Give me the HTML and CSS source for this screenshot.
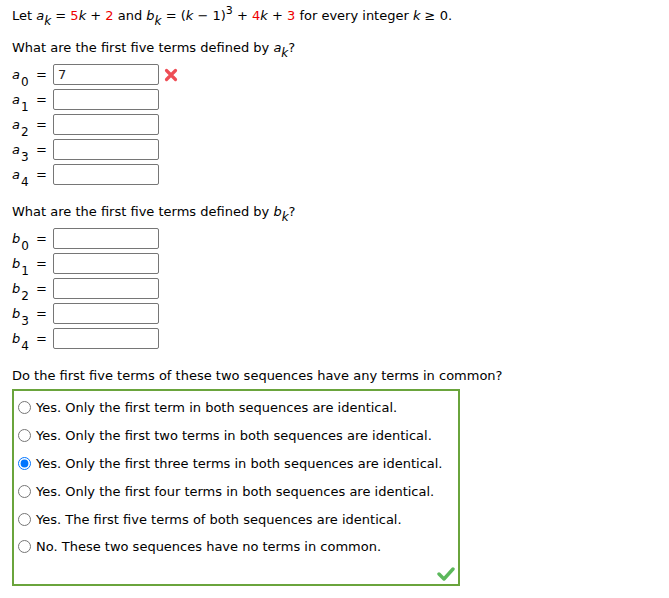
FILE: index.html
```html
<!DOCTYPE html>
<html lang="en">
<head>
  <meta charset="UTF-8">
  <title>Sequences</title>
  <link rel="stylesheet" href="styles.css">
</head>
<body>
  <div class="problem">
    <p class="prompt">Let <i>a</i><sub><i>k</i></sub> = <span class="red">5</span><i>k</i> + <span class="red">2</span> and <i>b</i><sub><i>k</i></sub> = (<i>k</i> &minus; 1)<sup>3</sup> + <span class="red">4</span><i>k</i> + <span class="red">3</span> for every integer <i>k</i> &ge; 0.</p>

    <!-- a terms -->
    <p class="question">What are the first five terms defined by <i>a</i><sub><i>k</i></sub>?</p>
    <div class="terms">
      <div class="term-row">
        <span class="label"><i>a</i><sub>0</sub></span><span class="eq">=</span>
        <input class="answer" type="text" value="7">
        <svg class="mark" width="14" height="14" viewBox="0 0 14 14"><path d="M2.5 2.5 L11.5 11.5 M11.5 2.5 L2.5 11.5" stroke="#ee4d55" stroke-width="3.2" stroke-linecap="round"/></svg>
      </div>
      <div class="term-row"><span class="label"><i>a</i><sub>1</sub></span><span class="eq">=</span><input class="answer" type="text"></div>
      <div class="term-row"><span class="label"><i>a</i><sub>2</sub></span><span class="eq">=</span><input class="answer" type="text"></div>
      <div class="term-row"><span class="label"><i>a</i><sub>3</sub></span><span class="eq">=</span><input class="answer" type="text"></div>
      <div class="term-row"><span class="label"><i>a</i><sub>4</sub></span><span class="eq">=</span><input class="answer" type="text"></div>
    </div>

    <!-- b terms -->
    <p class="question second">What are the first five terms defined by <i>b</i><sub><i>k</i></sub>?</p>
    <div class="terms">
      <div class="term-row"><span class="label"><i>b</i><sub>0</sub></span><span class="eq">=</span><input class="answer" type="text"></div>
      <div class="term-row"><span class="label"><i>b</i><sub>1</sub></span><span class="eq">=</span><input class="answer" type="text"></div>
      <div class="term-row"><span class="label"><i>b</i><sub>2</sub></span><span class="eq">=</span><input class="answer" type="text"></div>
      <div class="term-row"><span class="label"><i>b</i><sub>3</sub></span><span class="eq">=</span><input class="answer" type="text"></div>
      <div class="term-row"><span class="label"><i>b</i><sub>4</sub></span><span class="eq">=</span><input class="answer" type="text"></div>
    </div>

    <!-- common terms -->
    <p class="question common">Do the first five terms of these two sequences have any terms in common?</p>
    <div class="choices">
      <label class="choice"><input type="radio" name="common"> Yes. Only the first term in both sequences are identical.</label>
      <label class="choice"><input type="radio" name="common"> Yes. Only the first two terms in both sequences are identical.</label>
      <label class="choice"><input type="radio" name="common" checked> Yes. Only the first three terms in both sequences are identical.</label>
      <label class="choice"><input type="radio" name="common"> Yes. Only the first four terms in both sequences are identical.</label>
      <label class="choice"><input type="radio" name="common"> Yes. The first five terms of both sequences are identical.</label>
      <label class="choice"><input type="radio" name="common"> No. These two sequences have no terms in common.</label>
      <svg class="check" width="18" height="15" viewBox="0 0 18 15"><path d="M2 8 L7 13 L16 3" fill="none" stroke="#5cb85c" stroke-width="3.4" stroke-linecap="round" stroke-linejoin="round"/></svg>
    </div>
  </div>
</body>
</html>
```

FILE: styles.css
```css
/* Global Styles */
body {
  font-family: Verdana, "DejaVu Sans", sans-serif;
  font-size: 13px;
  color: #000;
  background: #fff;
  margin: 0;
  padding: 0;
}

.problem {
  padding: 7px 12px;
}

p {
  margin: 0;
}

.prompt {
  line-height: 18px;
}

.red {
  color: #e00;
}

sub {
  font-size: 12px;
  vertical-align: -5px;
  line-height: 0;
}

sup {
  font-size: 11px;
  vertical-align: 6px;
  line-height: 0;
}

.question {
  margin-top: 14px;
  line-height: 18px;
}

.question.second {
  margin-top: 16px;
}

.question.common {
  margin-top: 16px;
}

/* Term inputs */
.terms {
  margin-top: 5px;
}

.term-row {
  display: flex;
  align-items: center;
  height: 25px;
}

.label {
  width: 24px;
}

.label sub {
  vertical-align: -7px;
  margin-left: 1px;
}

.eq {
  width: 17px;
}

.answer {
  box-sizing: border-box;
  width: 106px;
  height: 21px;
  margin: 0;
  padding: 0 4px;
  border: 1px solid #767676;
  border-radius: 2px;
  font-family: inherit;
  font-size: 13px;
  color: #222;
}

.mark {
  margin-left: 5px;
}

/* Choices */
.choices {
  position: relative;
  width: 448px;
  height: 197px;
  margin-top: 4px;
  padding-top: 3px;
  box-sizing: border-box;
  border: 2px solid #6aa43c;
}

.choice {
  display: flex;
  align-items: center;
  height: 27.8px;
}

.choice input {
  margin: 0 5px 0 4px;
}

.check {
  position: absolute;
  right: 3px;
  bottom: 3px;
}
```
